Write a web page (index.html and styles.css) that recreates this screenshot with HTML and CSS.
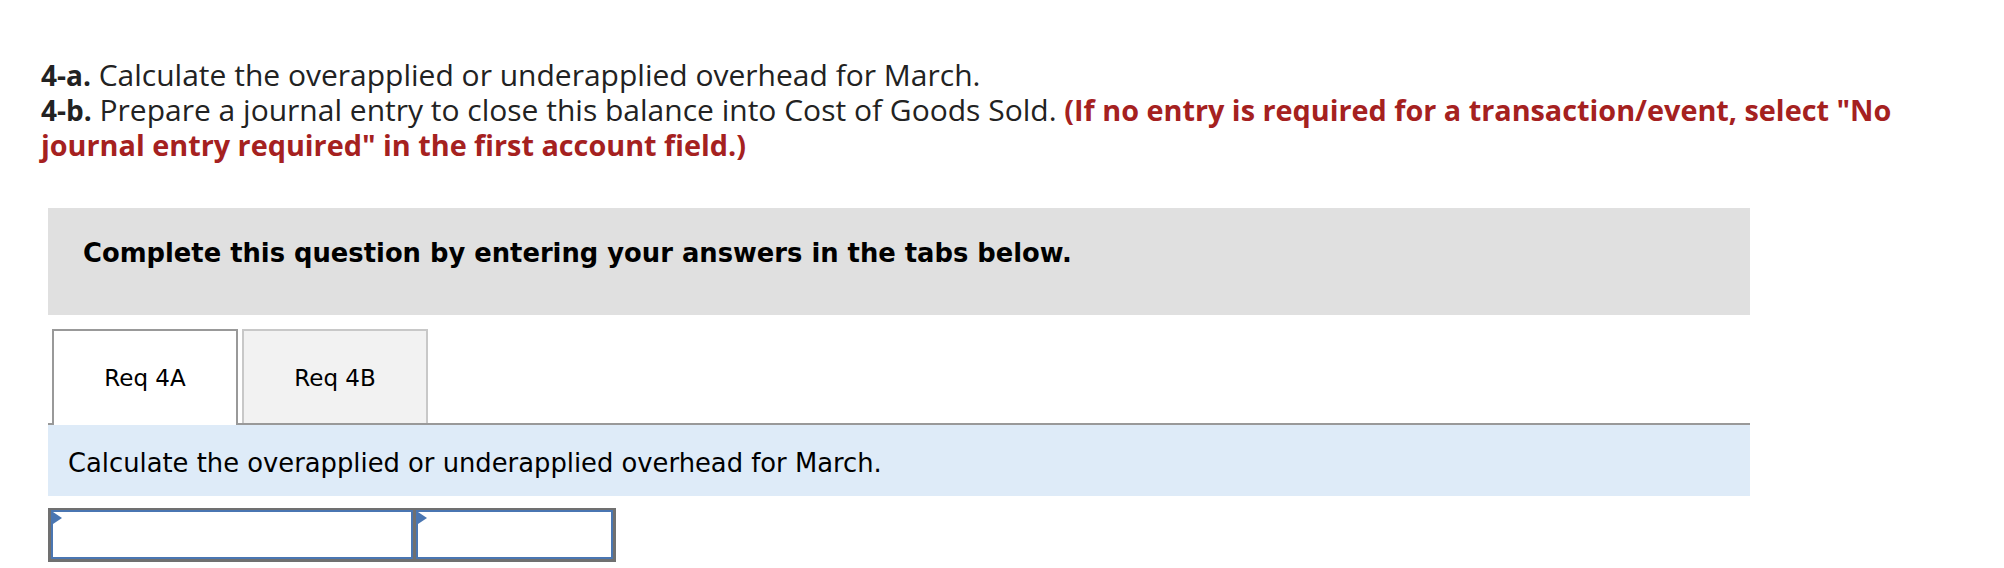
FILE: index.html
```html
<!DOCTYPE html>
<html lang="en">
<head>
    <meta charset="UTF-8">
    <meta name="viewport" content="width=device-width, initial-scale=1.0">
    <title>Req 4A</title>
    <link rel="stylesheet" href="styles.css">
</head>
<body>
    <div class="page">
        <p class="question">
            <strong>4-a.</strong> Calculate the overapplied or underapplied overhead for March.<br>
            <strong>4-b.</strong> Prepare a journal entry to close this balance into Cost of Goods Sold.
            <strong class="note">(If no entry is required for a transaction/event, select "No journal entry required" in the first account field.)</strong>
        </p>

        <div class="work">
            <div class="instructions">Complete this question by entering your answers in the tabs below.</div>

            <div class="tabs">
                <div class="tab active">Req 4A</div>
                <div class="tab">Req 4B</div>
            </div>

            <div class="tab-prompt">Calculate the overapplied or underapplied overhead for March.</div>

            <div class="answer">
                <div class="cell wide"><input type="text" class="cell-input"></div>
                <div class="cell"><input type="text" class="cell-input"></div>
            </div>
        </div>
    </div>
</body>
</html>
```

FILE: styles.css
```css
body {
    margin: 0;
    background: #fff;
    color: #222;
}

.page {
    padding: 57px 0 0 41px;
}

.question {
    margin: 0;
    max-width: 1900px;
    font-family: 'Open Sans', sans-serif;
    font-size: 30px;
    line-height: 35px;
    color: #222;
}

.question strong {
    font-size: 28px;
    line-height: 1;
    font-weight: 700;
}

.question .note {
    font-size: 28.8px;
    color: #a5211f;
}

.work {
    margin: 46px 0 0 7px;
    width: 1702px;
}

.instructions {
    background: #e0e0e0;
    padding: 30px 35px 47px 35px;
    font-family: 'DejaVu Sans', Verdana, sans-serif;
    font-size: 25.8px;
    line-height: 30px;
    font-weight: 700;
    color: #000;
}

.tabs {
    display: flex;
    gap: 4px;
    margin-top: 14px;
    padding-left: 4px;
    border-bottom: 2px solid #999;
    height: 94px;
}

.tab {
    box-sizing: border-box;
    width: 186px;
    height: 94px;
    padding-top: 34px;
    text-align: center;
    font-family: 'DejaVu Sans', Verdana, sans-serif;
    font-size: 23px;
    line-height: 27px;
    color: #000;
    background: #f2f2f2;
    border: 2px solid #c8c8c8;
    border-bottom: none;
}

.tab.active {
    background: #fff;
    border-color: #999;
    height: 96px;
}

.tab-prompt {
    background: #deebf8;
    padding: 23px 20px 18px 20px;
    font-family: 'DejaVu Sans', Verdana, sans-serif;
    font-size: 25.8px;
    line-height: 30px;
    color: #000;
}

.answer {
    display: flex;
    gap: 3px;
    width: 568px;
    box-sizing: border-box;
    margin-top: 12px;
    padding: 2px 3px 3px 3px;
    background: #707070;
}

.cell {
    position: relative;
    width: 197px;
    height: 49px;
    box-sizing: border-box;
    border: 2px solid #4a76b2;
    background: #fff;
}

.cell.wide {
    width: 362px;
}

.cell::before {
    content: "";
    position: absolute;
    top: 0;
    left: 0;
    border-left: 9px solid #4a76b2;
    border-top: 6px solid transparent;
    border-bottom: 6px solid transparent;
}

.cell-input {
    width: 100%;
    height: 100%;
    box-sizing: border-box;
    border: none;
    background: transparent;
    outline: none;
}
```
